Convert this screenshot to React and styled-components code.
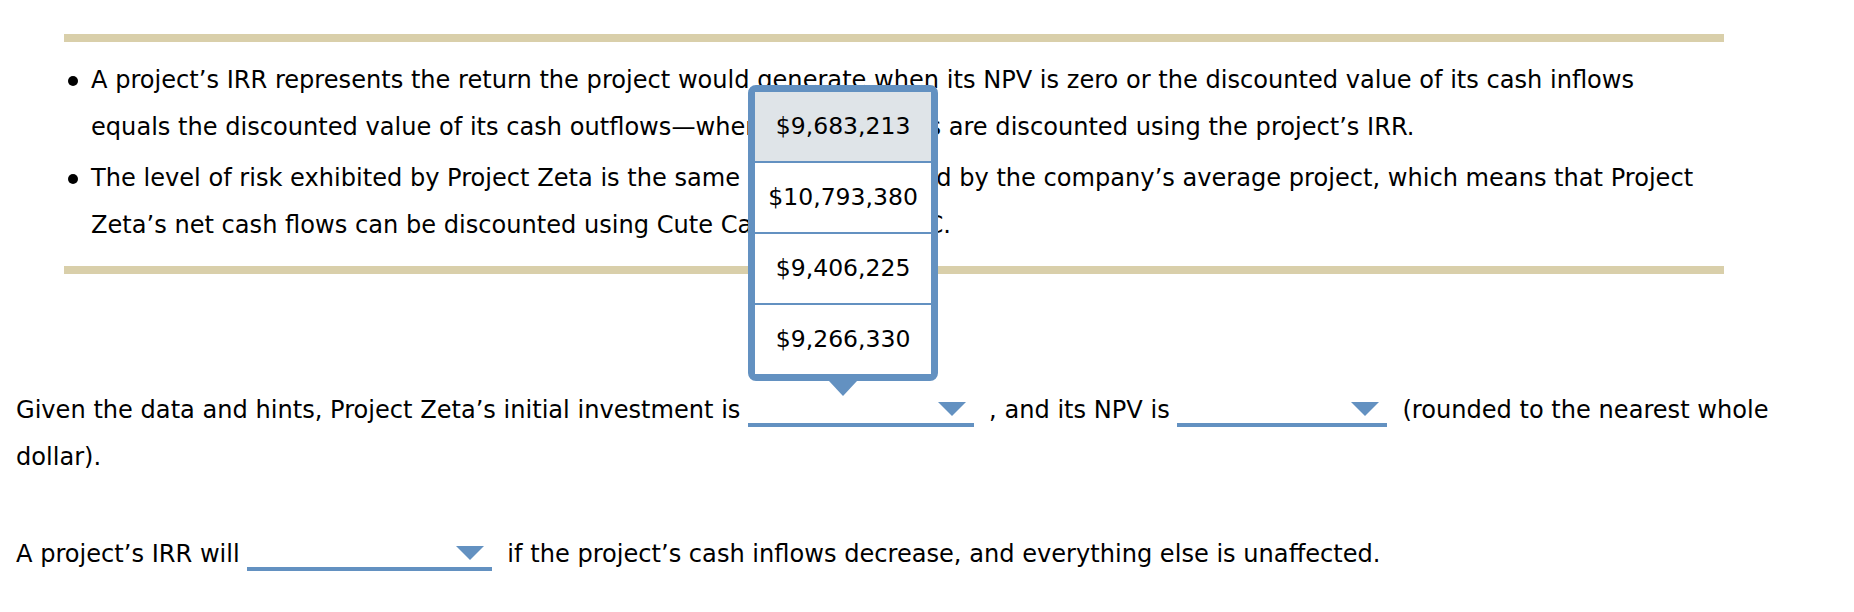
import React from 'react';
import styled, { createGlobalStyle } from 'styled-components';

const GlobalStyle = createGlobalStyle`
	body {
		margin: 0;
		background: #ffffff;
		color: #000000;
		font-family: "DejaVu Sans", Verdana, sans-serif;
	}
`;

const Page = styled.div`
	padding: 34px 16px 0;
`;

const HintBox = styled.div`
	margin-left: 48px;
	width: 1660px;
	border-top: 8px solid #d9cfaa;
	border-bottom: 8px solid #d9cfaa;
	padding: 15px 0 17px;
`;

const HintList = styled.ul`
	list-style: none;
	margin: 0;
	padding: 0;
`;

const HintItem = styled.li`
	display: grid;
	grid-template-columns: 27px auto;
	font-size: 24.1px;
	line-height: 47px;
	white-space: nowrap;
	& + & {
		margin-top: 4px;
	}
`;

const Dot = styled.span`
	width: 10px;
	height: 10px;
	border-radius: 50%;
	background: #000000;
	margin: 19px 0 0 4px;
`;

const Question = styled.p`
	margin: ${p => p.$top}px 0 0;
	font-size: 24.1px;
	line-height: 47px;
	white-space: nowrap;
`;

const Dropdown = styled.span`
	display: inline-block;
	position: relative;
	box-sizing: border-box;
	width: ${p => p.$width}px;
	height: 30px;
	padding-right: 8px;
	margin-right: 15px;
	border-bottom: 4px solid #6391c1;
	vertical-align: -9px;
`;

const Arrow = styled.svg`
	display: block;
	margin: 5px 0 0 auto;
`;

const Popup = styled.ul`
	position: absolute;
	left: 0;
	bottom: 42px;
	z-index: 10;
	box-sizing: border-box;
	width: 190px;
	margin: 0;
	padding: 0;
	list-style: none;
	background: #ffffff;
	border: 7px solid #6391c1;
	border-radius: 8px;
	&::after {
		content: "";
		position: absolute;
		top: 100%;
		left: 50%;
		margin-top: 7px;
		transform: translateX(-50%);
		border-left: 14px solid transparent;
		border-right: 14px solid transparent;
		border-top: 15px solid #6391c1;
	}
`;

const Option = styled.li`
	display: flex;
	align-items: center;
	justify-content: center;
	height: 69px;
	font-size: 23.5px;
	line-height: 1;
	background: ${p => (p.$active ? '#dfe4e8' : '#ffffff')};
	& + & {
		border-top: 2px solid #6391c1;
	}
`;

const DownArrow = () => (
	<Arrow width="28" height="14" viewBox="0 0 28 14">
		<polygon points="0,0 28,0 14,14" fill="#6391c1" />
	</Arrow>
);

const options = ['$9,683,213', '$10,793,380', '$9,406,225', '$9,266,330'];

export default function App() {
	return (
		<>
			<GlobalStyle />
			<Page>
				<HintBox>
					<HintList>
						<HintItem>
							<Dot />
							<span>
								A project’s IRR represents the return the project would generate when its NPV is zero or the discounted value of its cash inflows
								<br />
								equals the discounted value of its cash outflows—when the cash flows are discounted using the project’s IRR.
							</span>
						</HintItem>
						<HintItem>
							<Dot />
							<span>
								The level of risk exhibited by Project Zeta is the same as that exhibited by the company’s average project, which means that Project
								<br />
								Zeta’s net cash flows can be discounted using Cute Camel’s 8% WACC.
							</span>
						</HintItem>
					</HintList>
				</HintBox>

				<Question $top={113}>
					Given the data and hints, Project Zeta’s initial investment is{' '}
					<Dropdown $width={226}>
						<DownArrow />
						<Popup>
							{options.map((o, i) => (
								<Option key={o} $active={i === 0}>{o}</Option>
							))}
						</Popup>
					</Dropdown>
					, and its NPV is{' '}
					<Dropdown $width={210}>
						<DownArrow />
					</Dropdown>
					(rounded to the nearest whole
					<br />
					dollar).
				</Question>

				<Question $top={50}>
					A project’s IRR will{' '}
					<Dropdown $width={245}>
						<DownArrow />
					</Dropdown>
					if the project’s cash inflows decrease, and everything else is unaffected.
				</Question>
			</Page>
		</>
	);
}
